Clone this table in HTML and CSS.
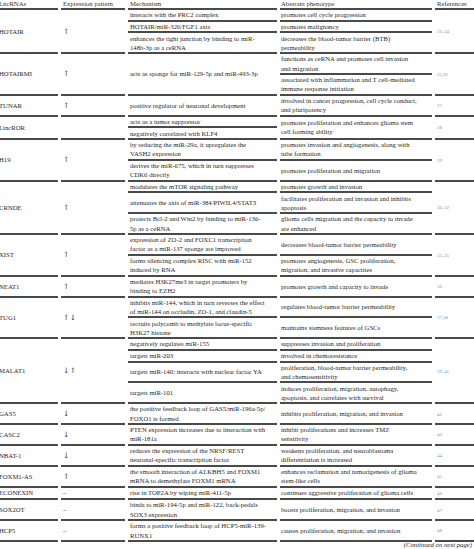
FILE: index.html
```
<!DOCTYPE html>
<html>
<head>
<meta charset="utf-8">
<link rel="stylesheet" href="styles.css">
</head>
<body>
<table class="t">
<colgroup><col class="w1"><col class="w2"><col class="w3"><col class="w4"><col class="w5"></colgroup>
<thead>
<tr><th class="c1">LncRNAs</th><th class="c2">Expression pattern</th><th class="c3">Mechanism</th><th class="c4">Aberrant phenotype</th><th class="c5">References</th></tr>
</thead>
<tbody>
<tr><td class="c1" rowspan="3">HOTAIR</td><td class="c2" rowspan="3"><span class="ar">↑</span></td><td class="c3">interacts with the PRC2 complex</td><td class="c4">promotes cell cycle progression</td><td class="c5" rowspan="3"><span class="ref">22–24</span></td></tr>
<tr><td class="c3">HOTAIR/miR-326/FGF1 axis</td><td class="c4">promotes malignancy</td></tr>
<tr><td class="c3">enhances the tight junction by binding to miR-<br>148b-3p as a ceRNA</td><td class="c4">decreases the blood-tumor barrier (BTB)<br>permeability</td></tr>

<tr><td class="c1" rowspan="2">HOTAIRMI</td><td class="c2" rowspan="2"><span class="ar">↑</span></td><td class="c3" rowspan="2">acts as sponge for miR-129-5p and miR-493-3p</td><td class="c4">functions as ceRNA and promotes cell invasion<br>and migration</td><td class="c5" rowspan="2"><span class="ref">25,26</span></td></tr>
<tr><td class="c4">associated with inflammation and T cell-mediated<br>immune response initiation</td></tr>

<tr><td class="c1">TUNAR</td><td class="c2"><span class="ar">↑</span></td><td class="c3">positive regulator of neuronal development</td><td class="c4">involved in cancer progression, cell cycle conduct,<br>and pluripotency</td><td class="c5"><span class="ref">27</span></td></tr>

<tr><td class="c1" rowspan="2">LincROR</td><td class="c2" rowspan="2"></td><td class="c3">acts as a tumor suppressor</td><td class="c4" rowspan="2">promotes proliferation and enhances glioma stem<br>cell forming ability</td><td class="c5" rowspan="2"><span class="ref">28</span></td></tr>
<tr><td class="c3">negatively correlated with KLF4</td></tr>

<tr><td class="c1" rowspan="2">H19</td><td class="c2" rowspan="2"><span class="ar">↑</span></td><td class="c3">by reducing the miR-29a, it upregulates the<br>VASH2 expression</td><td class="c4">promotes invasion and angiogenesis, along with<br>tube formation</td><td class="c5" rowspan="2"><span class="ref">29</span></td></tr>
<tr><td class="c3">derives the miR-675, which in turn suppresses<br>CDK6 directly</td><td class="c4">promotes proliferation and migration</td></tr>

<tr><td class="c1" rowspan="3">CRNDE</td><td class="c2" rowspan="3"><span class="ar">↑</span></td><td class="c3">modulates the mTOR signaling pathway</td><td class="c4">promotes growth and invasion</td><td class="c5" rowspan="3"><span class="ref">30–32</span></td></tr>
<tr><td class="c3">attenuates the axis of miR-384/PIWIL4/STAT3</td><td class="c4">facilitates proliferation and invasion and inhibits<br>apoptosis</td></tr>
<tr><td class="c3">protects Bcl-2 and Wnt2 by binding to miR-136-<br>5p as a ceRNA</td><td class="c4">glioma cells migration and the capacity to invade<br>are enhanced</td></tr>

<tr><td class="c1" rowspan="2">XIST</td><td class="c2" rowspan="2"><span class="ar">↑</span></td><td class="c3">expression of ZO-2 and FOXC1 transcription<br>factor as a miR-137 sponge are improved</td><td class="c4">decreases blood-tumor barrier permeability</td><td class="c5" rowspan="2"><span class="ref">33–35</span></td></tr>
<tr><td class="c3">forms silencing complex RISC with miR-152<br>induced by RNA</td><td class="c4">promotes angiogenesis, GSC proliferation,<br>migration, and invasive capacities</td></tr>

<tr><td class="c1">NEAT1</td><td class="c2"><span class="ar">↑</span></td><td class="c3">mediates H3K27me3 in target promoters by<br>binding to EZH2</td><td class="c4">promotes growth and capacity to invade</td><td class="c5"><span class="ref">36</span></td></tr>

<tr><td class="c1" rowspan="2">TUG1</td><td class="c2" rowspan="2"><span class="ar">↑↓</span></td><td class="c3">inhibits miR-144, which in turn reverses the effect<br>of miR-144 on occludin, ZO-1, and claudin-5</td><td class="c4">regulates blood-tumor barrier permeability</td><td class="c5" rowspan="2"><span class="ref">37,38</span></td></tr>
<tr><td class="c3">recruits polycomb to methylate locus-specific<br>H3K27 histone</td><td class="c4">maintains stemness features of GSCs</td></tr>

<tr><td class="c1" rowspan="4">MALAT1</td><td class="c2" rowspan="4"><span class="ar">↓↑</span></td><td class="c3">negatively regulates miR-155</td><td class="c4">suppresses invasion and proliferation</td><td class="c5" rowspan="4"><span class="ref">39–41</span></td></tr>
<tr><td class="c3">targets miR-203</td><td class="c4">involved in chemoresistance</td></tr>
<tr><td class="c3">targets miR-140; interacts with nuclear factor YA</td><td class="c4">proliferation, blood-tumor barrier permeability,<br>and chemosensitivity</td></tr>
<tr><td class="c3">targets miR-101</td><td class="c4">induces proliferation, migration, autophagy,<br>apoptosis, and correlates with survival</td></tr>

<tr><td class="c1">GAS5</td><td class="c2"><span class="ar">↓</span></td><td class="c3">the positive feedback loop of GAS5/miR-196a-5p/<br>FOXO1 is formed</td><td class="c4">inhibits proliferation, migration, and invasion</td><td class="c5"><span class="ref">42</span></td></tr>
<tr><td class="c1">CASC2</td><td class="c2"><span class="ar">↓</span></td><td class="c3">PTEN expression increases due to interaction with<br>miR-181a</td><td class="c4">inhibit proliferations and increases TMZ<br>sensitivity</td><td class="c5"><span class="ref">43</span></td></tr>
<tr><td class="c1">NBAT-1</td><td class="c2"><span class="ar">↓</span></td><td class="c3">reduces the expression of the NRSF/REST<br>neuronal-specific transcription factor</td><td class="c4">weakens proliferation, and neuroblastoma<br>differentiation is increased</td><td class="c5"><span class="ref">44</span></td></tr>
<tr><td class="c1">FOXM1-AS</td><td class="c2"><span class="ar">↑</span></td><td class="c3">the smooth interaction of ALKBH5 and FOXM1<br>mRNA to demethylate FOXM1 mRNA</td><td class="c4">enhances reclamation and tumorigenesis of glioma<br>stem-like cells</td><td class="c5"><span class="ref">45</span></td></tr>
<tr><td class="c1">ECONEXIN</td><td class="c2">–</td><td class="c3">rise in TOP2A by wiping miR-411-5p</td><td class="c4">continues aggressive proliferation of glioma cells</td><td class="c5"><span class="ref">46</span></td></tr>
<tr><td class="c1">SOX2OT</td><td class="c2">–</td><td class="c3">binds to miR-194-5p and miR-122, back-pedals<br>SOX3 expression</td><td class="c4">boosts proliferation, migration, and invasion</td><td class="c5"><span class="ref">47</span></td></tr>
<tr><td class="c1">HCP5</td><td class="c2">–</td><td class="c3">forms a positive feedback loop of HCP5-miR-139-<br>RUNX1</td><td class="c4">causes proliferation, migration, and invasion</td><td class="c5"><span class="ref">48</span></td></tr>
</tbody>
</table>
<p class="cont">(Continued on next page)</p>
</body>
</html>
```
FILE: styles.css
```
html, body {
  margin: 0;
  padding: 0;
  overflow: hidden;
  background: #ffffff;
}
body {
  font-family: "Liberation Serif", "Times New Roman", serif;
  font-size: 6.7px;
  color: #1f1f1f;
}
.t {
  border-collapse: separate;
  border-spacing: 3px 0;
  table-layout: fixed;
  width: 488px;
  margin: -1.6px 0 0 -5px;
}
.w1 { width: 60px; }
.w2 { width: 64px; }
.w3 { width: 149px; }
.w4 { width: 152px; }
.w5 { width: 45px; }
.t th, .t td {
  padding: 0.25px 0 0.2px 0;
  line-height: 9.2px;
  border-bottom: 2px solid #4a4a4a;
  vertical-align: middle;
  white-space: nowrap;
  text-align: left;
  font-weight: normal;
  overflow: hidden;
}
.t th { color: #333333; }
.t .c1 { padding-left: 1px; }
.t .c2 { padding-left: 2px; }
.t .c3 { padding-left: 2px; }
.t .c4 { padding-left: 1px; }
.t .c5 { padding-left: 2px; }
.ar {
  font-family: "DejaVu Serif", serif;
  font-size: 7.5px;
  letter-spacing: 0.5px;
}
.ref {
  color: #5b97d1;
  font-size: 4.8px;
}
.cont {
  margin: -1px 2px 0 0;
  text-align: right;
  font-style: italic;
  line-height: 8px;
}
```
